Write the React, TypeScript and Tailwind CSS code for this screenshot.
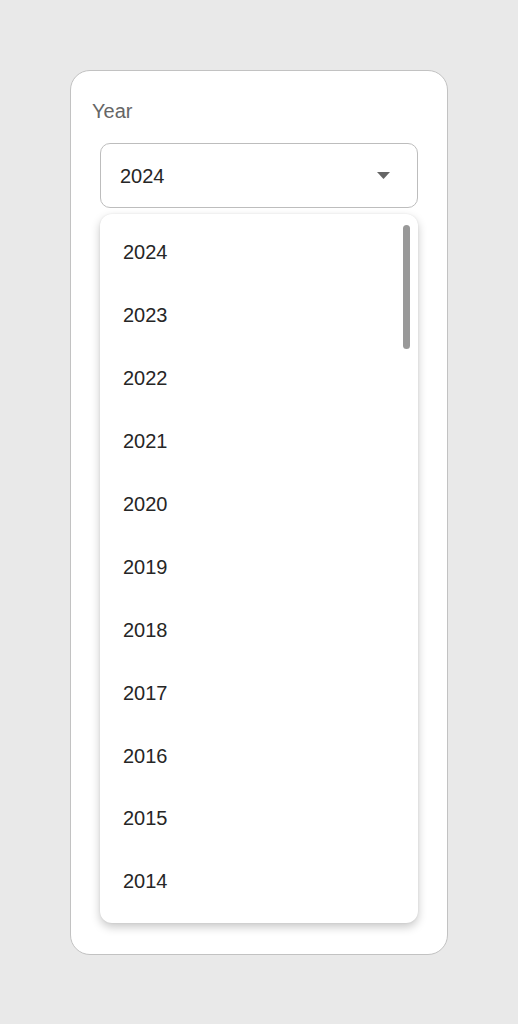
import React from "react";

const years = [2024, 2023, 2022, 2021, 2020, 2019, 2018, 2017, 2016, 2015, 2014];

export default function App() {
  return (
    <div
      className="min-h-screen bg-[#e9e9e9] pt-[70px] px-[70px]"
      style={{ fontFamily: '"Liberation Sans", Arial, sans-serif' }}
    >
      <div className="bg-white border border-[#c2c2c2] rounded-[20px] h-[885px] pt-[28px]">
        <div className="pl-[21px] text-[20px] leading-[24px] text-[#666666]">Year</div>
        <div className="mx-[29px] mt-[20px]">
          <div className="h-[65px] border border-[#bdbdbd] rounded-[10px] flex items-center justify-between pl-[19px] pr-[27px]">
            <span className="text-[20px] text-[#262626]">2024</span>
            <svg width="13" height="7" viewBox="0 0 13 7">
              <path d="M0 0 L13 0 L6.5 7 Z" fill="#666666" />
            </svg>
          </div>
          <div className="relative mt-[6px] h-[709px] rounded-[12px] bg-white shadow-[0_4px_10px_rgba(0,0,0,0.22),0_0_2px_rgba(0,0,0,0.08)] overflow-hidden">
            <div className="pt-[7px]">
              {years.map((y) => (
                <div key={y} className="h-[62.9px] flex items-center pl-[23px] text-[20px] text-[#262626]">
                  {y}
                </div>
              ))}
            </div>
            <div className="absolute right-[8px] top-[11px] w-[7px] h-[124px] rounded-full bg-[#999999]" />
          </div>
        </div>
      </div>
    </div>
  );
}
